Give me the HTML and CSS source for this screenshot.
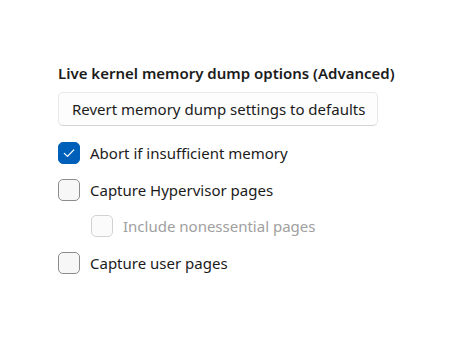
FILE: index.html
```html
<!doctype html>
<html>

<head>
  <title>Dump options</title>
  <link rel="stylesheet" href="styles.css">
</head>

<body>
  <div class="panel">
    <h2 class="title">Live kernel memory dump options (Advanced)</h2>
    <button type="button" class="btn">Revert memory dump settings to defaults</button>
    <ul class="checks">
      <li class="check checked">
        <span class="box">
          <svg width="14" height="14" viewBox="0 0 14 14"><path d="M2.3 7.4 L5.5 10.4 L11.8 3.9" fill="none" stroke="#fff" stroke-width="1.3" stroke-linecap="round" stroke-linejoin="round"/></svg>
        </span>
        <span class="label">Abort if insufficient memory</span>
      </li>
      <li class="check">
        <span class="box"></span>
        <span class="label">Capture Hypervisor pages</span>
      </li>
      <li class="check sub disabled">
        <span class="box"></span>
        <span class="label">Include nonessential pages</span>
      </li>
      <li class="check">
        <span class="box"></span>
        <span class="label">Capture user pages</span>
      </li>
    </ul>
  </div>
</body>

</html>
```

FILE: styles.css
```css
html {
  font-family: "Noto Sans", "Open Sans", sans-serif;
  color: #1b1b1b;
}

body {
  margin: 0;
  background: #ffffff;
}

.panel {
  padding: 63px 0 0 58px;
  display: flex;
  flex-direction: column;
  align-items: flex-start;
}

.title {
  font-size: 15px;
  font-weight: 600;
  margin: 0;
  line-height: 20px;
}

.btn {
  font: inherit;
  font-size: 15px;
  color: #1b1b1b;
  margin-top: 9px;
  height: 34px;
  padding: 0 12px 0 13px;
  background: #fdfdfd;
  border: 1px solid #e8e8e8;
  border-bottom-color: #d4d4d4;
  border-radius: 5px;
}

.checks {
  list-style: none;
  margin: 16px 0 0 0;
  padding: 0;
  display: flex;
  flex-direction: column;
  gap: 14.7px;
}

.check {
  display: flex;
  align-items: center;
  gap: 10px;
  height: 22px;
  font-size: 15px;
}

.box {
  width: 22px;
  height: 22px;
  box-sizing: border-box;
  border: 1px solid #8c8c8c;
  border-radius: 5px;
  background: #f7f7f7;
  display: flex;
  align-items: center;
  justify-content: center;
}

.checked .box {
  background: #005fb8;
  border-color: #005fb8;
}

.sub {
  margin-left: 33px;
}

.disabled .box {
  border-color: #d2d2d2;
  background: #fbfbfb;
}

.disabled .label {
  color: #a0a0a0;
}
```
